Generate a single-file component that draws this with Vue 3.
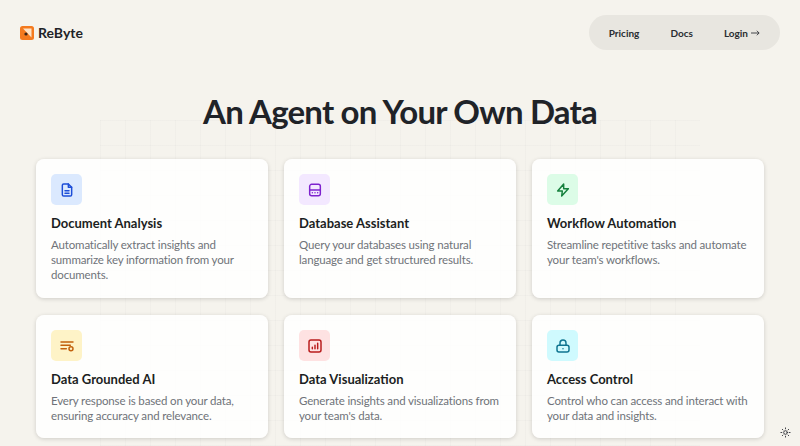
<script setup>
const cards = [
  { title: 'Document Analysis', text: 'Automatically extract insights and summarize key information from your documents.', tone: 'blue', icon: 'doc' },
  { title: 'Database Assistant', text: 'Query your databases using natural language and get structured results.', tone: 'purple', icon: 'db' },
  { title: 'Workflow Automation', text: "Streamline repetitive tasks and automate your team's workflows.", tone: 'green', icon: 'bolt' },
  { title: 'Data Grounded AI', text: 'Every response is based on your data, ensuring accuracy and relevance.', tone: 'amber', icon: 'list' },
  { title: 'Data Visualization', text: "Generate insights and visualizations from your team's data.", tone: 'red', icon: 'chart' },
  { title: 'Access Control', text: 'Control who can access and interact with your data and insights.', tone: 'cyan', icon: 'lock' }
]
</script>

<template>
  <div class="page">
    <div class="grid-bg"></div>
    <header class="header">
      <div class="brand">
        <svg class="logo" viewBox="0 0 14 14" width="14" height="14">
          <rect width="14" height="14" rx="2.5" fill="#f47a1f" />
          <path d="M3 2.500h8.500v9z" fill="#fde3c8" />
          <circle cx="6" cy="8" r="1.6" fill="#3a2418" />
        </svg>
        <span>ReByte</span>
      </div>
      <nav class="nav">
        <a>Pricing</a>
        <a>Docs</a>
        <a class="login">Login
          <svg viewBox="0 0 10 8" width="9" height="8" fill="none" stroke="#33363b" stroke-width="1">
            <path d="M0 4h9M6.500 1.500 9 4 6.500 6.500" />
          </svg>
        </a>
      </nav>
    </header>

    <h1>An Agent on Your Own Data</h1>

    <section class="cards">
      <article v-for="c in cards" :key="c.title" class="card">
        <div class="icon" :class="c.tone">
          <svg viewBox="0 0 24 24" width="16" height="16" fill="none" stroke="currentColor" stroke-width="2.2" stroke-linecap="round" stroke-linejoin="round">
            <template v-if="c.icon === 'doc'">
              <path d="M14 3H7a2 2 0 0 0-2 2v14a2 2 0 0 0 2 2h10a2 2 0 0 0 2-2V8z" />
              <path d="M14 3v5h5M9 13h6M9 17h6" />
            </template>
            <template v-else-if="c.icon === 'db'">
              <rect x="4" y="3.500" width="16" height="17" rx="3" />
              <path d="M4 12h16M8 16h.01M12 16h.01M16 16h.01" />
            </template>
            <template v-else-if="c.icon === 'bolt'">
              <path d="M13 3 4 13.500h7l-1 7.500 10-11h-7z" />
            </template>
            <template v-else-if="c.icon === 'list'">
              <path d="M3 6h18M3 11h14M3 16h8" />
              <circle cx="18" cy="16" r="3" />
            </template>
            <template v-else-if="c.icon === 'chart'">
              <rect x="3" y="3" width="18" height="18" rx="3" />
              <path d="M8 16v-2M12 16v-5M16 16V8" />
            </template>
            <template v-else>
              <rect x="3" y="11" width="18" height="10" rx="3" />
              <path d="M7.500 11V7.500a4.500 4.500 0 0 1 9 0V11M12 16h.01" />
            </template>
          </svg>
        </div>
        <h3>{{ c.title }}</h3>
        <p>{{ c.text }}</p>
      </article>
    </section>

    <svg class="sun" viewBox="0 0 24 24" width="11" height="11" fill="none" stroke="#33363b" stroke-width="2" stroke-linecap="round">
      <circle cx="12" cy="12" r="4" />
      <path d="M12 2v2M12 20v2M2 12h2M20 12h2M5 5l1.500 1.500M17.500 17.500 19 19M5 19l1.500-1.500M17.500 6.500 19 5" />
    </svg>
  </div>
</template>

<style>
html, body {
  margin: 0;
  background: #f5f3ed;
}
</style>

<style scoped>
.page {
  position: relative;
  width: 800px;
  height: 446px;
  overflow: hidden;
  background: #f5f3ed;
  font-family: Lato, "Open Sans", sans-serif;
  color: #1f2328;
}
.grid-bg {
  position: absolute;
  left: 100px;
  right: 100px;
  top: 120px;
  bottom: 0;
  background-image:
    linear-gradient(to right, rgba(120, 120, 100, 0.03) 1px, transparent 1px),
    linear-gradient(to bottom, rgba(120, 120, 100, 0.03) 1px, transparent 1px);
  background-size: 25px 25px;
}
.header {
  position: relative;
  display: flex;
  justify-content: space-between;
  align-items: center;
  padding: 15px 20px 0;
}
.brand {
  display: flex;
  align-items: center;
  gap: 4px;
  font-size: 14px;
  font-weight: 700;
}
.logo {
  display: block;
}
.nav {
  display: flex;
  align-items: center;
  gap: 31px;
  height: 35px;
  padding: 0 20px;
  border-radius: 18px;
  background: #e8e6e0;
  font-size: 10px;
  font-weight: 700;
  color: #2a2d31;
}
.login {
  display: flex;
  align-items: center;
  gap: 3px;
}
h1 {
  position: relative;
  margin: 39px 0 0;
  text-align: center;
  font-size: 33px;
  line-height: 44px;
  font-weight: 700;
  letter-spacing: -0.8px;
}
.cards {
  position: relative;
  display: grid;
  grid-template-columns: repeat(3, 232px);
  grid-template-rows: 139px 123px;
  gap: 17px 16px;
  margin: 26px 0 0 36px;
}
.card {
  box-sizing: border-box;
  padding: 15px;
  border-radius: 8px;
  background: rgba(255, 255, 255, 0.86);
  box-shadow: 0 1px 4px rgba(0, 0, 0, 0.16);
}
.icon {
  display: flex;
  align-items: center;
  justify-content: center;
  width: 31px;
  height: 31px;
  border-radius: 5px;
}
.blue { background: #dbe9fe; color: #1d4ed8; }
.purple { background: #f3e8ff; color: #7e22ce; }
.green { background: #dcfce7; color: #15803d; }
.amber { background: #fef3c7; color: #c2610c; }
.red { background: #fee2e2; color: #b91c1c; }
.cyan { background: #cffafe; color: #0e7490; }
h3 {
  margin: 9px 0 0;
  font-size: 13px;
  line-height: 18px;
  font-weight: 700;
  color: #1c1e22;
}
p {
  margin: 5px 0 0;
  font-size: 11.5px;
  line-height: 15px;
  letter-spacing: -0.15px;
  color: #6f7379;
}
.sun {
  position: absolute;
  right: 9px;
  bottom: 8px;
}
</style>
